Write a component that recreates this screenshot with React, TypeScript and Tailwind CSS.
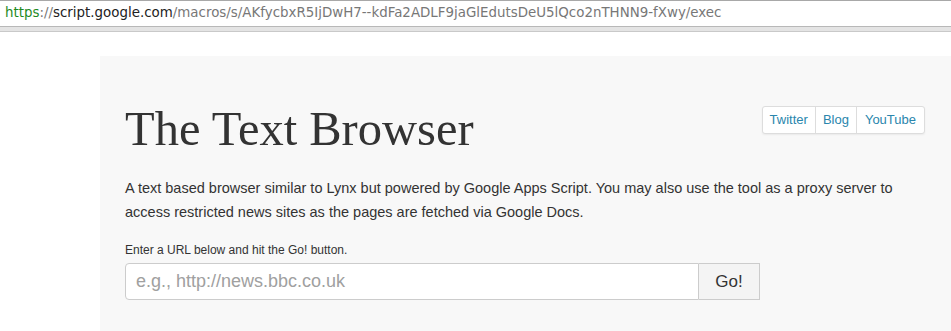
export default function App() {
  return (
    <div className="w-[951px] h-[331px] overflow-hidden bg-white">
      <div className="h-[27px] border-t border-[#a8a8a8] border-b border-b-[#b8b8b8] flex items-center pl-[5px]">
        <span className="text-[#777] whitespace-nowrap" style={{ fontFamily: '"DejaVu Sans", Verdana, sans-serif', fontSize: "13.4px" }}>
          <span className="text-[#1f8a1f]">https</span>
          <span>://</span>
          <span className="text-[#222]">script.google.com</span>
          <span>/macros/s/AKfycbxR5IjDwH7--kdFa2ADLF9jaGlEdutsDeU5lQco2nTHNN9-fXwy/exec</span>
        </span>
      </div>
      <div className="h-[5px] bg-[#e4e4e4] border-b border-[#c9c9c9]"></div>
      <div className="pl-[100px] pt-[24px]">
        <div className="bg-[#f8f8f8] h-[280px] pl-[25px] pr-[26px]" style={{ fontFamily: '"Liberation Sans", Arial, sans-serif' }}>
          <div className="flex items-start justify-between pt-[51px]">
            <h1 className="text-[48.5px] leading-[56px] text-[#333] -mt-[6px]" style={{ fontFamily: '"Liberation Serif", "Times New Roman", serif' }}>
              The Text Browser
            </h1>
            <div className="flex h-[28px] -mt-[1px] bg-white border border-[#ddd] rounded-[3px] shadow-[0_1px_2px_rgba(0,0,0,0.06)] text-[13px] text-[#2a86ad]">
              <span className="px-[7px] flex items-center border-r border-[#ddd]">Twitter</span>
              <span className="px-[7px] flex items-center border-r border-[#ddd]">Blog</span>
              <span className="px-[8px] flex items-center">YouTube</span>
            </div>
          </div>
          <p className="mt-[19px] text-[14.5px] leading-[24px] text-[#333] w-[790px]">
            A text based browser similar to Lynx but powered by Google Apps Script. You may also use the tool as a proxy server to access restricted news sites as the pages are fetched via Google Docs.
          </p>
          <div className="mt-[18px] text-[12px] leading-[16px] text-[#333]">Enter a URL below and hit the Go! button.</div>
          <div className="mt-[5px] flex h-[37px] w-[635px]">
            <div className="flex-1 bg-white border border-[#ccc] rounded-l-[4px] flex items-center pl-[10px] text-[18px] text-[#a0a0a0]">
              e.g., http://news.bbc.co.uk
            </div>
            <div className="w-[61px] bg-[#f4f4f4] border border-l-0 border-[#ccc] flex items-center justify-center text-[17px] text-[#333]">
              Go!
            </div>
          </div>
        </div>
      </div>
    </div>
  );
}
